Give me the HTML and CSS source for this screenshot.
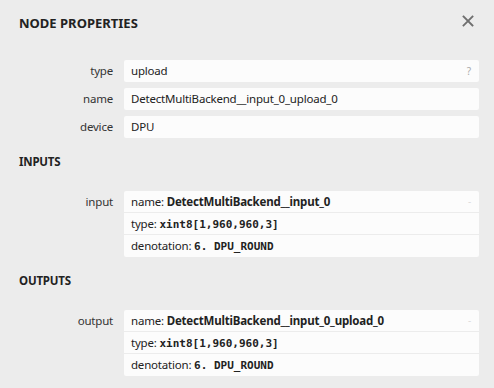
FILE: index.html
```html
<!DOCTYPE html>
<html lang="en">
<head>
    <meta charset="UTF-8">
    <title>Node Properties</title>
    <link rel="stylesheet" href="styles.css">
</head>
<body>
    <div class="sidebar">
        <div class="sidebar-header">
            <span class="sidebar-title">NODE PROPERTIES</span>
            <span class="sidebar-close">
                <svg width="12" height="12" viewBox="0 0 12 12">
                    <path d="M1.5 1.5 L10.5 10.5 M10.5 1.5 L1.5 10.5" stroke="#6f6f6f" stroke-width="1.8" stroke-linecap="square"/>
                </svg>
            </span>
        </div>

        <div class="prop">
            <div class="prop-name">type</div>
            <div class="prop-value">
                <div class="value-line">upload<span class="value-btn">?</span></div>
            </div>
        </div>
        <div class="prop">
            <div class="prop-name">name</div>
            <div class="prop-value">
                <div class="value-line">DetectMultiBackend__input_0_upload_0</div>
            </div>
        </div>
        <div class="prop">
            <div class="prop-name">device</div>
            <div class="prop-value">
                <div class="value-line">DPU</div>
            </div>
        </div>

        <div class="section-title">INPUTS</div>
        <div class="prop">
            <div class="prop-name">input</div>
            <div class="prop-value">
                <div class="value-line">name: <b>DetectMultiBackend__input_0</b><span class="value-btn dash">-</span></div>
                <div class="value-line">type: <code>xint8[1,960,960,3]</code></div>
                <div class="value-line">denotation: <code>6. DPU_ROUND</code></div>
            </div>
        </div>

        <div class="section-title">OUTPUTS</div>
        <div class="prop">
            <div class="prop-name">output</div>
            <div class="prop-value">
                <div class="value-line">name: <b>DetectMultiBackend__input_0_upload_0</b><span class="value-btn dash">-</span></div>
                <div class="value-line">type: <code>xint8[1,960,960,3]</code></div>
                <div class="value-line">denotation: <code>6. DPU_ROUND</code></div>
            </div>
        </div>
    </div>
</body>
</html>
```

FILE: styles.css
```css
body {
    margin: 0;
    background: #ececec;
    font-family: "Noto Sans", sans-serif;
    font-size: 11.5px;
    letter-spacing: -0.2px;
    color: #222;
}
.sidebar {
    padding: 14px 15px 0 19px;
}
.sidebar-header {
    display: flex;
    justify-content: space-between;
    align-items: center;
    height: 18px;
    margin-bottom: 28px;
}
.sidebar-title {
    font-weight: bold;
    font-size: 13px;
    letter-spacing: 0;
    color: #222;
}
.sidebar-close {
    display: flex;
    margin-right: 5px;
    margin-top: -4px;
}
.prop {
    display: grid;
    grid-template-columns: 94px 1fr;
    column-gap: 11px;
    margin-bottom: 6px;
}
.prop-name {
    text-align: right;
    line-height: 22px;
    color: #333;
}
.prop-value {
    background: #fcfcfc;
    border-radius: 2px;
}
.value-line {
    position: relative;
    height: 21px;
    line-height: 21px;
    padding: 0 7px;
    white-space: nowrap;
    border-bottom: 1px solid #ececec;
}
.value-line:last-child {
    border-bottom: none;
    height: 22px;
    line-height: 22px;
}
.value-line b {
    font-weight: bold;
}
code {
    font-family: "DejaVu Sans Mono", monospace;
    font-size: 11px;
    font-weight: bold;
    letter-spacing: 0;
    color: #222;
}
.value-btn {
    position: absolute;
    right: 8px;
    top: 0;
    color: #aaa;
    font-size: 10px;
}
.value-btn.dash {
    color: #ddd;
}
.section-title {
    font-weight: bold;
    font-size: 11.5px;
    line-height: 16px;
    margin: 16px 0 21px 0;
    color: #222;
}
```
